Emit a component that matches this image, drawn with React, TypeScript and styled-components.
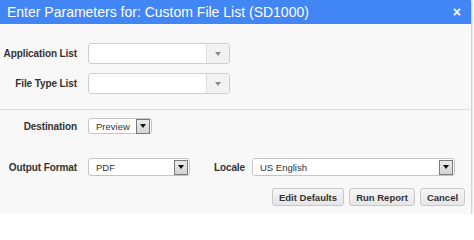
import React from "react";
import styled, { createGlobalStyle } from "styled-components";

const Global = createGlobalStyle`
  html, body { margin: 0; padding: 0; background: #ffffff; }
  body { font-family: "Liberation Sans", Arial, sans-serif; }
`;

const Dialog = styled.div`
  width: 471px;
  height: 214px;
  background: #f8f8f8;
  box-shadow: 1px 1px 2px rgba(0,0,0,0.25);
  display: flex;
  flex-direction: column;
`;

const TitleBar = styled.div`
  height: 24px;
  background: #4285f4;
  display: flex;
  align-items: center;
  justify-content: space-between;
  padding: 0 10px 0 7px;
  color: #ffffff;
  font-size: 14px;
  white-space: nowrap;
`;

const Close = styled.span`
  font-weight: bold;
  font-size: 14px;
`;

const Section = styled.div<{ $pt: number; $gap: number }>`
  display: flex;
  flex-direction: column;
  gap: ${(p) => p.$gap}px;
  padding-top: ${(p) => p.$pt}px;
`;

const Row = styled.div`
  display: flex;
  align-items: center;
`;

const Label = styled.label<{ $w?: number; $mr?: number }>`
  width: ${(p) => p.$w ?? 77}px;
  text-align: right;
  font-size: 10px;
  letter-spacing: -0.1px;
  font-weight: bold;
  color: #333;
  margin-right: ${(p) => p.$mr ?? 11}px;
  flex: none;
  white-space: nowrap;
`;

const Separator = styled.div`
  height: 1px;
  background: #dcdcdc;
  margin: 15px 1px 0 0;
`;

const ModernSelect = styled.div`
  width: 142px;
  height: 21px;
  box-sizing: border-box;
  border: 1px solid #cfcfcf;
  border-radius: 3px;
  background: #fff;
  display: flex;
  overflow: hidden;
`;

const ModernField = styled.div`
  flex: 1;
`;

const ModernArrow = styled.div`
  width: 22px;
  border-left: 1px solid #dedede;
  background: #f2f2f2;
  display: flex;
  align-items: center;
  justify-content: center;
  &::after {
    content: "";
    border-left: 3.5px solid transparent;
    border-right: 3.5px solid transparent;
    border-top: 4px solid #8a8a8a;
  }
`;

const ClassicSelect = styled.div<{ $w: number; $h: number }>`
  width: ${(p) => p.$w}px;
  height: ${(p) => p.$h}px;
  box-sizing: border-box;
  border: 1px solid #c4c4c4;
  border-radius: 3px;
  background: #fff;
  display: flex;
  align-items: center;
  padding: 0 1px 0 7px;
  font-size: 9.5px;
  color: #333;
  flex: none;
`;

const ClassicText = styled.span`
  flex: 1;
`;

const ClassicArrow = styled.div`
  width: 12px;
  height: 13px;
  border: 1px solid #7a7a7a;
  background: linear-gradient(#eaeaea, #d4d4d4);
  display: flex;
  align-items: center;
  justify-content: center;
  &::after {
    content: "";
    border-left: 3.5px solid transparent;
    border-right: 3.5px solid transparent;
    border-top: 4px solid #111;
  }
`;

const Spacer = styled.div<{ $w: number }>`
  width: ${(p) => p.$w}px;
  flex: none;
`;

const Buttons = styled.div`
  display: flex;
  justify-content: flex-end;
  gap: 5px;
  padding-right: 6px;
  margin-top: 12px;
`;

const Button = styled.button<{ $w: number }>`
  width: ${(p) => p.$w}px;
  height: 18px;
  padding: 0;
  border: 1px solid #c8c8c8;
  border-radius: 3px;
  background: linear-gradient(#f6f6f6, #e6e6e6);
  font-family: "Liberation Sans", Arial, sans-serif;
  font-size: 9.5px;
  font-weight: bold;
  color: #333;
  white-space: nowrap;
`;

const Modern = () => (
  <ModernSelect>
    <ModernField />
    <ModernArrow />
  </ModernSelect>
);

const Classic = ({ w, h, text }: { w: number; h: number; text: string }) => (
  <ClassicSelect $w={w} $h={h}>
    <ClassicText>{text}</ClassicText>
    <ClassicArrow />
  </ClassicSelect>
);

export default function App() {
  return (
    <>
      <Global />
      <Dialog>
        <TitleBar>
          <span>Enter Parameters for: Custom File List (SD1000)</span>
          <Close>×</Close>
        </TitleBar>
        <Section $pt={19} $gap={9}>
          <Row>
            <Label>Application List</Label>
            <Modern />
          </Row>
          <Row>
            <Label>File Type List</Label>
            <Modern />
          </Row>
        </Section>
        <Separator />
        <Section $pt={8} $gap={24}>
          <Row>
            <Label>Destination</Label>
            <Classic w={64} h={16} text="Preview" />
          </Row>
          <Row>
            <Label>Output Format</Label>
            <Classic w={102} h={18} text="PDF" />
            <Spacer $w={22} />
            <Label $w={33} $mr={7}>Locale</Label>
            <Classic w={203} h={18} text="US English" />
          </Row>
        </Section>
        <Buttons>
          <Button $w={72}>Edit Defaults</Button>
          <Button $w={66}>Run Report</Button>
          <Button $w={45}>Cancel</Button>
        </Buttons>
      </Dialog>
    </>
  );
}
